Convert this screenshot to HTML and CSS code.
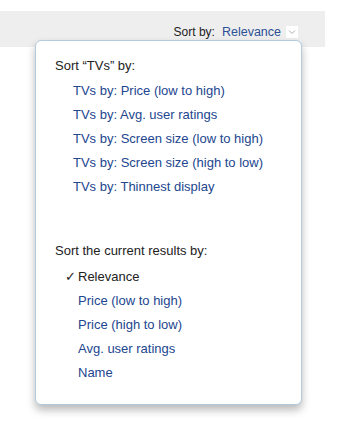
FILE: index.html
```html
<!DOCTYPE html>
<html>
<head>
<meta charset="utf-8">
<link rel="stylesheet" href="styles.css">
</head>
<body>
<div class="page">
  <div class="bar">
    <span class="label">Sort by:</span>
    <span class="value">Relevance</span>
    <span class="select">
      <svg width="8" height="6" viewBox="0 0 8 6"><path d="M1 1.5 L4 4.5 L7 1.5" fill="none" stroke="#a8b0b8" stroke-width="1"/></svg>
    </span>
  </div>
  <div class="menu">
    <div class="heading">Sort “TVs” by:</div>
    <ul class="list first">
      <li>TVs by: Price (low to high)</li>
      <li>TVs by: Avg. user ratings</li>
      <li>TVs by: Screen size (low to high)</li>
      <li>TVs by: Screen size (high to low)</li>
      <li>TVs by: Thinnest display</li>
    </ul>
    <div class="heading second">Sort the current results by:</div>
    <ul class="list current">
      <li class="checked"><span class="check">✓</span>Relevance</li>
      <li>Price (low to high)</li>
      <li>Price (high to low)</li>
      <li>Avg. user ratings</li>
      <li>Name</li>
    </ul>
  </div>
</div>
</body>
</html>
```

FILE: styles.css
```css
html, body {
  margin: 0;
  padding: 0;
  background: #ffffff;
}
body {
  font-family: "Liberation Sans", Arial, sans-serif;
  font-size: 13px;
  color: #222222;
}
.page {
  position: relative;
  width: 340px;
  height: 440px;
  padding-top: 11px;
  box-sizing: border-box;
}
.bar {
  width: 325px;
  height: 36px;
  background: #eeeeee;
  display: flex;
  align-items: center;
  justify-content: flex-end;
  padding-right: 27px;
  box-sizing: border-box;
  padding-top: 6px;
}
.label {
  color: #222222;
  font-size: 12px;
}
.value {
  color: #2c4f95;
  margin-left: 7px;
  font-size: 12.5px;
}
.select {
  width: 12px;
  height: 12px;
  background: #ffffff;
  margin-left: 5px;
  display: flex;
  align-items: center;
  justify-content: center;
}
.menu {
  position: absolute;
  left: 35px;
  top: 40px;
  width: 267px;
  height: 365px;
  box-sizing: border-box;
  background: #ffffff;
  border: 1px solid #b3cbdc;
  border-radius: 6px;
  box-shadow: 0 5px 8px rgba(0, 0, 0, 0.28);
  padding: 13px 0 0 19px;
}
.heading {
  line-height: 24px;
  color: #222222;
}
.heading.second {
  margin-top: 40px;
}
.list {
  list-style: none;
  margin: 1px 0 0 0;
  padding: 0;
}
.list li {
  line-height: 24px;
  color: #22468f;
}
.list.first li {
  padding-left: 18px;
}
.list.current {
  margin-top: 2px;
}
.list.current li {
  padding-left: 23px;
  position: relative;
}
.list.current li.checked {
  color: #222222;
}
.check {
  position: absolute;
  left: 10px;
  top: 0;
  font-size: 13px;
  font-weight: bold;
  font-family: "DejaVu Sans", sans-serif;
}
```
